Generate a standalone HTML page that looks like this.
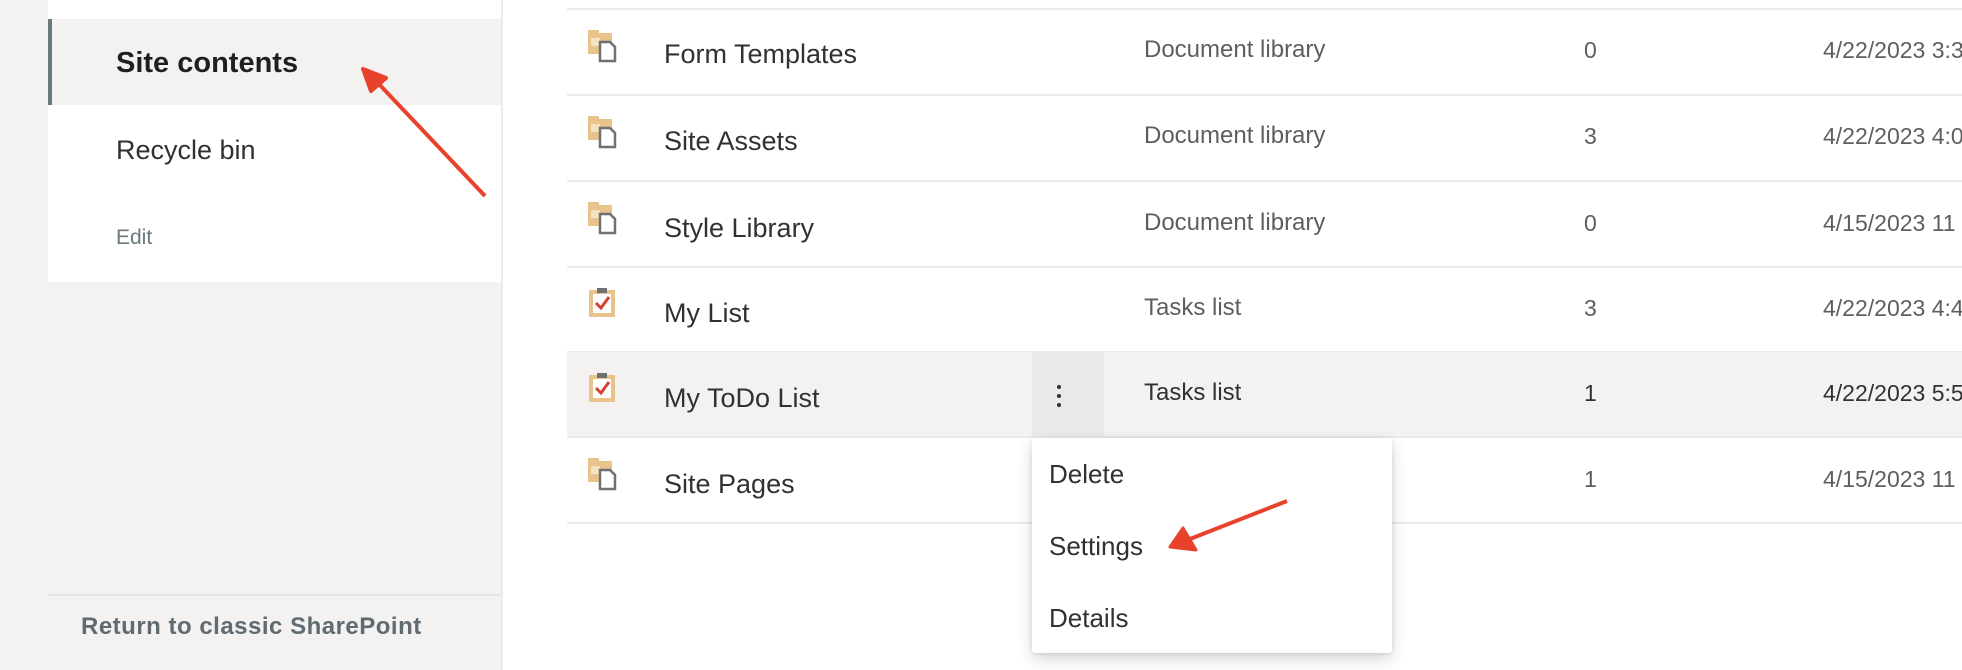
<!DOCTYPE html>
<html><head><meta charset="utf-8"><style>
*{margin:0;padding:0;box-sizing:border-box}
body{width:1962px;height:670px;overflow:hidden;background:#fff;font-family:"Liberation Sans",sans-serif;position:relative}
.a{position:absolute;white-space:nowrap}
.row{position:absolute;left:567px;width:1395px;height:86px;border-bottom:2px solid #edebe9;overflow:hidden;white-space:nowrap}
.name{position:absolute;left:97px;font-size:27px;color:#323130;line-height:30px}
.type{position:absolute;left:577px;font-size:24px;color:#605e5c;line-height:28px}
.cnt{position:absolute;left:1017px;font-size:23px;color:#605e5c;line-height:28px}
.date{position:absolute;left:1256px;font-size:23px;color:#605e5c;line-height:28px;white-space:nowrap}
.ic{position:absolute;left:20px;top:20px}
.mi{position:absolute;left:17px;font-size:26px;color:#323130;line-height:30px}
</style></head><body>
<div class="a" style="left:0;top:0;width:48px;height:670px;background:#f3f2f1"></div>
<div class="a" style="left:48px;top:0;width:455px;height:670px;background:#f3f2f1;border-right:2px solid #edebe9"></div>
<div class="a" style="left:48px;top:0;width:453px;height:282px;background:#fff"></div>
<div class="a" style="left:48px;top:19px;width:453px;height:86px;background:#f3f2f1;border-left:4px solid #69797e"></div>
<div class="a" style="left:116px;top:63px;font-size:29px;font-weight:bold;color:#201f1e;line-height:34px;transform:translateY(-50%)">Site contents</div>
<div class="a" style="left:116px;top:150px;font-size:27px;color:#323130;line-height:32px;transform:translateY(-50%)">Recycle bin</div>
<div class="a" style="left:116px;top:238px;font-size:21px;color:#69797e;line-height:24px;transform:translateY(-50%)">Edit</div>
<div class="a" style="left:48px;top:594px;width:453px;height:2px;background:#e8e6e4"></div>
<div class="a" style="left:81px;top:627px;font-size:24px;font-weight:bold;color:#5f6b71;line-height:28px;transform:translateY(-50%);letter-spacing:0.5px">Return to classic SharePoint</div>

<div class="a" style="left:567px;top:0;width:1395px;height:10px;border-bottom:2px solid #edebe9"></div>

<svg width="0" height="0" style="position:absolute"><defs>
<g id="lib"><rect x="1" y="3" width="24" height="21" fill="#e8c48c"/><rect x="1" y="0" width="11" height="4" fill="#e8c48c"/><rect x="4" y="8" width="9" height="8" fill="#f5e2c0"/><path d="M13 12h10l5 5v14H13z" fill="#fff" stroke="#707070" stroke-width="2.5"/></g>
<g id="task"><rect x="2" y="5" width="26" height="27" fill="#e8c48c"/><rect x="6" y="9" width="18" height="19" fill="#fff"/><path d="M10 3h10v5H10z" fill="#707070"/><path d="M9 18l5 5 8-11" fill="none" stroke="#d2432f" stroke-width="3"/></g>
</defs></svg>

<div class="row" style="top:10px"><svg class="ic" width="34" height="34"><use href="#lib"/></svg><div class="name" style="top:29px">Form Templates</div><div class="type" style="top:26px">Document library</div><div class="cnt" style="top:26px">0</div><div class="date" style="top:26px">4/22/2023 3:3</div></div>
<div class="row" style="top:96px"><svg class="ic" width="34" height="34"><use href="#lib"/></svg><div class="name" style="top:30px">Site Assets</div><div class="type" style="top:26px">Document library</div><div class="cnt" style="top:26px">3</div><div class="date" style="top:26px">4/22/2023 4:0</div></div>
<div class="row" style="top:182px"><svg class="ic" width="34" height="34"><use href="#lib"/></svg><div class="name" style="top:31px">Style Library</div><div class="type" style="top:27px">Document library</div><div class="cnt" style="top:27px">0</div><div class="date" style="top:27px">4/15/2023 11</div></div>
<div class="row" style="top:267px"><svg class="ic" style="top:18px" width="34" height="34"><use href="#task"/></svg><div class="name" style="top:31px">My List</div><div class="type" style="top:27px">Tasks list</div><div class="cnt" style="top:27px">3</div><div class="date" style="top:27px">4/22/2023 4:4</div></div>
<div class="row" style="top:352px;background:#f3f2f1"><svg class="ic" style="top:18px" width="34" height="34"><use href="#task"/></svg><div class="name" style="top:31px">My ToDo List</div>
<div class="a" style="left:465px;top:0;width:72px;height:86px;background:#ebeae8"></div>
<div class="a" style="left:490px;top:33px;width:4px;height:4px;border-radius:50%;background:#323130"></div>
<div class="a" style="left:490px;top:42px;width:4px;height:4px;border-radius:50%;background:#323130"></div>
<div class="a" style="left:490px;top:51px;width:4px;height:4px;border-radius:50%;background:#323130"></div>
<div class="type" style="top:27px;color:#323130">Tasks list</div><div class="cnt" style="top:27px;color:#323130">1</div><div class="date" style="top:27px;color:#323130">4/22/2023 5:5</div></div>
<div class="row" style="top:438px"><svg class="ic" width="34" height="34"><use href="#lib"/></svg><div class="name" style="top:31px">Site Pages</div><div class="type" style="top:27px">Document library</div><div class="cnt" style="top:27px">1</div><div class="date" style="top:27px">4/15/2023 11</div></div>

<div class="a" style="left:1032px;top:438px;width:360px;height:215px;background:#fff;border-radius:3px;box-shadow:0 6px 16px rgba(0,0,0,0.16),0 1px 4px rgba(0,0,0,0.1)">
<div class="mi" style="top:21px">Delete</div>
<div class="mi" style="top:93px">Settings</div>
<div class="mi" style="top:165px">Details</div>
</div>

<svg class="a" style="left:0;top:0" width="1962" height="670">
<line x1="485" y1="196" x2="377" y2="82" stroke="#e8412c" stroke-width="4"/>
<polygon points="363,69 386,78 371,91" fill="#e8412c" stroke="#e8412c" stroke-width="4" stroke-linejoin="round"/>
<line x1="1287" y1="501" x2="1190" y2="539" stroke="#e8412c" stroke-width="4"/>
<polygon points="1170,547 1183,528 1196,550" fill="#e8412c" stroke="#e8412c" stroke-width="3" stroke-linejoin="round"/>
</svg>
</body></html>
